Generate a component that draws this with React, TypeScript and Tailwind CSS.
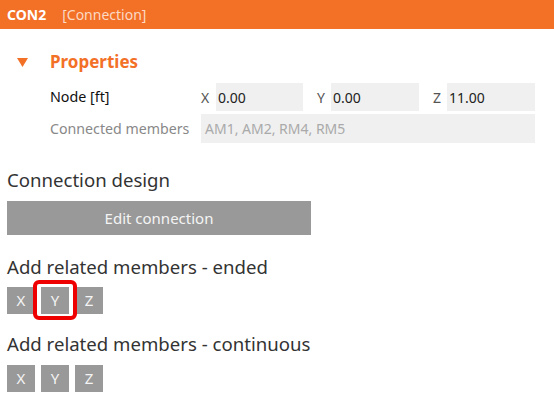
import React from "react";

const font = { fontFamily: '"Noto Sans", "Open Sans", sans-serif' };

function AxisBtn({ label }: { label: string }) {
  return (
    <div className="w-[28px] h-[27px] bg-[#999999] text-[#f4f4f4] text-[15px] flex items-center justify-center">
      {label}
    </div>
  );
}

export default function App() {
  return (
    <div className="w-[554px] h-[399px] bg-white overflow-hidden" style={font}>
      <div className="h-[29px] bg-[#f37027] flex items-center pl-[7px] text-[14px] text-white">
        <span className="font-bold">CON2</span>
        <span className="ml-[16px] text-[#fbd9c4]">[Connection]</span>
      </div>

      <div className="flex items-center pl-[17px] mt-[20px] h-[26px]">
        <svg width="11" height="9" viewBox="0 0 11 9" className="mr-[22px]">
          <polygon points="0,0 11,0 5.5,9" fill="#f37027" />
        </svg>
        <span className="text-[17px] font-bold text-[#f37027]">Properties</span>
      </div>

      <div className="pl-[50px] mt-[8px] flex flex-col gap-[3px]">
        <div className="flex items-center h-[28px]">
          <span className="w-[151px] text-[14.3px] text-[#111111]">Node [ft]</span>
          <span className="w-[15px] text-[14px] text-[#555555]">X</span>
          <div className="w-[87px] h-[28px] bg-[#f0f0f0] flex items-center pl-[2px] text-[14px] text-[#222222]">0.00</div>
          <span className="ml-[14px] w-[14px] text-[14px] text-[#555555]">Y</span>
          <div className="w-[88px] h-[28px] bg-[#f0f0f0] flex items-center pl-[2px] text-[14px] text-[#222222]">0.00</div>
          <span className="ml-[14px] w-[14px] text-[14px] text-[#555555]">Z</span>
          <div className="w-[88px] h-[28px] bg-[#f0f0f0] flex items-center pl-[2px] text-[14px] text-[#222222]">11.00</div>
        </div>
        <div className="flex items-center h-[29px]">
          <span className="w-[151px] text-[14.2px] text-[#888888]">Connected members</span>
          <div className="w-[334px] h-[29px] bg-[#f0f0f0] flex items-center pl-[4px] text-[14px] text-[#aaaaaa]">
            AM1, AM2, RM4, RM5
          </div>
        </div>
      </div>

      <div className="pl-[7px] mt-[24px] flex flex-col">
        <div className="text-[18.6px] text-[#333333] h-[26px] flex items-center">Connection design</div>
        <div className="mt-[8px] w-[304px] h-[34px] bg-[#999999] text-[#f4f4f4] text-[15px] flex items-center justify-center">
          Edit connection
        </div>

        <div className="mt-[19px] text-[18.6px] text-[#333333] h-[26px] flex items-center">Add related members - ended</div>
        <div className="mt-[7px] flex gap-[6px]">
          <AxisBtn label="X" />
          <div className="relative">
            <AxisBtn label="Y" />
            <div className="absolute left-[-8px] top-[-7px] w-[44px] h-[40px] border-[4px] border-[#ee0000] rounded-[6px]" />
          </div>
          <AxisBtn label="Z" />
        </div>

        <div className="mt-[17px] text-[18.6px] text-[#333333] h-[26px] flex items-center">Add related members - continuous</div>
        <div className="mt-[8px] flex gap-[6px]">
          <AxisBtn label="X" />
          <AxisBtn label="Y" />
          <AxisBtn label="Z" />
        </div>
      </div>
    </div>
  );
}
